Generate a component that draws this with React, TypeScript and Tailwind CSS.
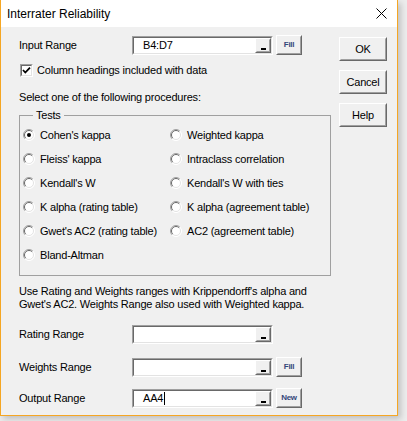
import React from 'react';

const tests: [string, string | null][] = [
  ["Cohen's kappa", 'Weighted kappa'],
  ["Fleiss' kappa", 'Intraclass correlation'],
  ["Kendall's W", "Kendall's W with ties"],
  ['K alpha (rating table)', 'K alpha (agreement table)'],
  ["Gwet's AC2 (rating table)", 'AC2 (agreement table)'],
  ['Bland-Altman', null],
];

function Radio({ checked = false }: { checked?: boolean }) {
  return (
    <svg width="12" height="12" viewBox="0 0 12 12" className="shrink-0">
      <circle cx="6" cy="6" r="5.5" fill="#fff" />
      <path d="M2.1 9.9 A5.5 5.5 0 0 1 9.9 2.1" fill="none" stroke="#a0a0a0" strokeWidth="1" />
      <path d="M2.8 9.2 A4.5 4.5 0 0 1 9.2 2.8" fill="none" stroke="#696969" strokeWidth="1" />
      <path d="M9.9 2.1 A5.5 5.5 0 0 1 2.1 9.9" fill="none" stroke="#ffffff" strokeWidth="1" />
      <path d="M9.2 2.8 A4.5 4.5 0 0 1 2.8 9.2" fill="none" stroke="#e3e3e3" strokeWidth="1" />
      {checked && <circle cx="6" cy="6" r="2" fill="#000" />}
    </svg>
  );
}

function Raised({ className = '', children }: { className?: string; children?: React.ReactNode }) {
  return (
    <div className={`flex border border-t-white border-l-white border-r-[#696969] border-b-[#696969] bg-[#f0f0f0] ${className}`}>
      <div className="flex flex-1 items-center justify-center border border-t-[#f0f0f0] border-l-[#f0f0f0] border-r-[#a0a0a0] border-b-[#a0a0a0]">
        {children}
      </div>
    </div>
  );
}

function RangeBox({ value = '', caret = false }: { value?: string; caret?: boolean }) {
  return (
    <div className="flex h-[19px] w-[141px] border border-t-[#a0a0a0] border-l-[#a0a0a0] border-r-white border-b-white">
      <div className="flex flex-1 items-center border border-t-[#696969] border-l-[#696969] border-r-[#e3e3e3] border-b-[#e3e3e3] bg-white">
        <span className="flex flex-1 items-center pl-[9px]">
          {value}
          {caret && <span className="ml-[1px] h-[13px] w-[1px] bg-black" />}
        </span>
        <Raised className="h-[15px] w-[16px]">
          <span className="mt-[7px] h-[2px] w-[5px] bg-black" />
        </Raised>
      </div>
    </div>
  );
}

function SmallBtn({ label }: { label: string }) {
  return (
    <Raised className="ml-[3px] h-[20px] w-[26px]">
      <span className="text-[8px] font-bold tracking-[-0.3px] text-[#34477a]">{label}</span>
    </Raised>
  );
}

function RangeRow({ label, value, caret, btn, className = '' }: { label: string; value?: string; caret?: boolean; btn?: string; className?: string }) {
  return (
    <div className={`flex items-center ${className}`}>
      <span className="w-[113px]">{label}</span>
      <RangeBox value={value} caret={caret} />
      {btn && <SmallBtn label={btn} />}
    </div>
  );
}

export default function App() {
  return (
    <div className="h-[421px] w-[407px] bg-[#ececec] font-['Liberation_Sans',Arial,sans-serif] text-[11px] tracking-[-0.2px] text-black">
      <div className="flex h-[416px] w-[398px] flex-col border-x border-b border-[#f5a623] bg-[#f0f0f0] shadow-[3px_3px_6px_rgba(0,0,0,0.18)]">
        {/* title bar */}
        <div className="flex h-[27px] items-center justify-between bg-white pl-[6px] pr-[10px]">
          <span className="text-[12px] tracking-normal">Interrater Reliability</span>
          <svg width="11" height="11" viewBox="0 0 11 11">
            <path d="M0.5 0.5 L10.5 10.5 M10.5 0.5 L0.5 10.5" stroke="#000" strokeWidth="1" />
          </svg>
        </div>

        <div className="flex pl-[18px]">
          <div className="flex w-[312px] flex-col">
            <RangeRow label="Input Range" value="B4:D7" btn="Fill" className="mt-[8px]" />

            <div className="mt-[9px] flex h-[13px] items-center">
              <div className="ml-[1px] flex h-[13px] w-[13px] border border-t-[#a0a0a0] border-l-[#a0a0a0] border-r-white border-b-white">
                <div className="flex flex-1 items-center justify-center border border-t-[#696969] border-l-[#696969] border-r-[#e3e3e3] border-b-[#e3e3e3] bg-white">
                  <svg width="9" height="9" viewBox="0 0 9 9">
                    <path d="M1 4 L3.3 6.5 L8 1.6" fill="none" stroke="#000" strokeWidth="1.8" />
                  </svg>
                </div>
              </div>
              <span className="ml-[4px]">Column headings included with data</span>
            </div>

            <p className="mt-[13px] h-[14px] leading-[14px]">Select one of the following procedures:</p>

            <fieldset className="mt-[4px] border border-[#a0a0a0] pb-[8px] pl-[3px] pt-[1px]">
              <legend className="ml-[10px] px-[3px] leading-[14px]">Tests</legend>
              {tests.map(([a, b], i) => (
                <div key={i} className="flex h-[24px] items-center">
                  <div className="flex w-[147px] items-center gap-[5px]">
                    <Radio checked={i === 0} />
                    <span>{a}</span>
                  </div>
                  {b && (
                    <div className="flex items-center gap-[5px]">
                      <Radio />
                      <span>{b}</span>
                    </div>
                  )}
                </div>
              ))}
            </fieldset>

            <p className="mt-[9px] leading-[13px]">
              Use Rating and Weights ranges with Krippendorff's alpha and
              <br />
              Gwet's AC2. Weights Range also used with Weighted kappa.
            </p>

            <RangeRow label="Rating Range" className="mt-[14px]" />
            <RangeRow label="Weights Range" btn="Fill" className="mt-[13px]" />
            <RangeRow label="Output Range" value="AA4" caret btn="New" className="mt-[11px]" />
          </div>

          <div className="ml-[8px] flex flex-col gap-[9px] pt-[10px]">
            {['OK', 'Cancel', 'Help'].map(t => (
              <Raised key={t} className="h-[24px] w-[48px]">
                <span>{t}</span>
              </Raised>
            ))}
          </div>
        </div>
      </div>
    </div>
  );
}
